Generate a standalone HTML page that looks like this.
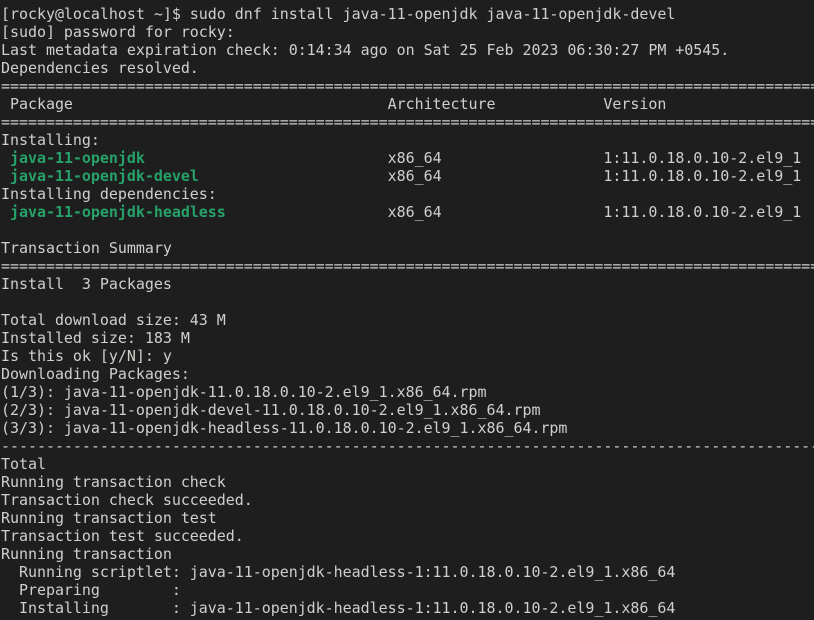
<html><head><style>
body{margin:0;background:#1e1e1e;width:814px;height:620px;overflow:hidden}
pre{margin:0;position:absolute;top:5px;left:1px;font-family:"DejaVu Sans Mono","Liberation Mono",monospace;font-size:15px;line-height:18px;color:#d0cfcc;white-space:pre;letter-spacing:-0.04px}
b{color:#26a269}
</style></head><body><pre>[rocky@localhost ~]$ sudo dnf install java-11-openjdk java-11-openjdk-devel
[sudo] password for rocky:
Last metadata expiration check: 0:14:34 ago on Sat 25 Feb 2023 06:30:27 PM +0545.
Dependencies resolved.
============================================================================================
 Package                                   Architecture            Version
============================================================================================
Installing:
 <b>java-11-openjdk</b>                           x86_64                  1:11.0.18.0.10-2.el9_1
 <b>java-11-openjdk-devel</b>                     x86_64                  1:11.0.18.0.10-2.el9_1
Installing dependencies:
 <b>java-11-openjdk-headless</b>                  x86_64                  1:11.0.18.0.10-2.el9_1

Transaction Summary
============================================================================================
Install  3 Packages

Total download size: 43 M
Installed size: 183 M
Is this ok [y/N]: y
Downloading Packages:
(1/3): java-11-openjdk-11.0.18.0.10-2.el9_1.x86_64.rpm
(2/3): java-11-openjdk-devel-11.0.18.0.10-2.el9_1.x86_64.rpm
(3/3): java-11-openjdk-headless-11.0.18.0.10-2.el9_1.x86_64.rpm
--------------------------------------------------------------------------------------------
Total
Running transaction check
Transaction check succeeded.
Running transaction test
Transaction test succeeded.
Running transaction
  Running scriptlet: java-11-openjdk-headless-1:11.0.18.0.10-2.el9_1.x86_64
  Preparing        :
  Installing       : java-11-openjdk-headless-1:11.0.18.0.10-2.el9_1.x86_64
</pre></body></html>
